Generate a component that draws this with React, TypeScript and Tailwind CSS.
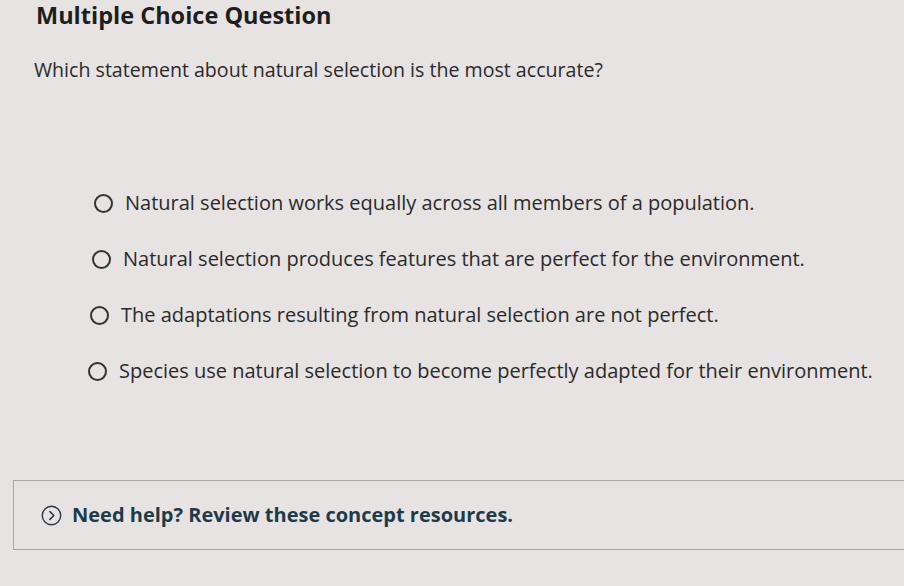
import React from "react";

const options = [
  "Natural selection works equally across all members of a population.",
  "Natural selection produces features that are perfect for the environment.",
  "The adaptations resulting from natural selection are not perfect.",
  "Species use natural selection to become perfectly adapted for their environment.",
];

const shifts = ["pl-[94px]", "pl-[92px]", "pl-[90px]", "pl-[88px]"];

export default function App() {
  return (
    <div
      className="w-[904px] h-[586px] overflow-hidden bg-[#e6e3e2] text-[#262626]"
      style={{ fontFamily: "'Open Sans', sans-serif" }}
    >
      <div className="pl-[36px] pt-[1px]">
        <h1 className="text-[23.5px] font-bold leading-[28px] text-[#1e1e1e]">Multiple Choice Question</h1>
      </div>
      <p className="pl-[34px] mt-[28px] text-[19.6px] leading-[26px] text-[#2a2a2a]">
        Which statement about natural selection is the most accurate?
      </p>
      <div className="mt-[107px] flex flex-col gap-[30px]">
        {options.map((o, i) => (
          <div key={i} className={`flex items-center gap-[12px] ${shifts[i]}`}>
            <span className="w-[19px] h-[19px] rounded-full border-[2.5px] border-[#333] shrink-0" />
            <span className="text-[20px] leading-[26px] text-[#2a2a2a]">{o}</span>
          </div>
        ))}
      </div>
      <div className="mt-[96px] ml-[13px] h-[70px] border border-r-0 border-[#a8a6a6] flex items-center pl-[27px] gap-[10px]">
        <svg width="21" height="21" viewBox="0 0 20 20" className="shrink-0">
          <circle cx="10" cy="10" r="8.8" fill="none" stroke="#2a3a40" strokeWidth="1.3" />
          <path d="M8.5 6.3 L12.2 10 L8.5 13.7" fill="none" stroke="#2a3a40" strokeWidth="1.5" strokeLinecap="round" strokeLinejoin="round" />
        </svg>
        <span className="text-[20px] font-bold leading-[26px] text-[#1d3b48]">
          Need help? Review these concept resources.
        </span>
      </div>
    </div>
  );
}
